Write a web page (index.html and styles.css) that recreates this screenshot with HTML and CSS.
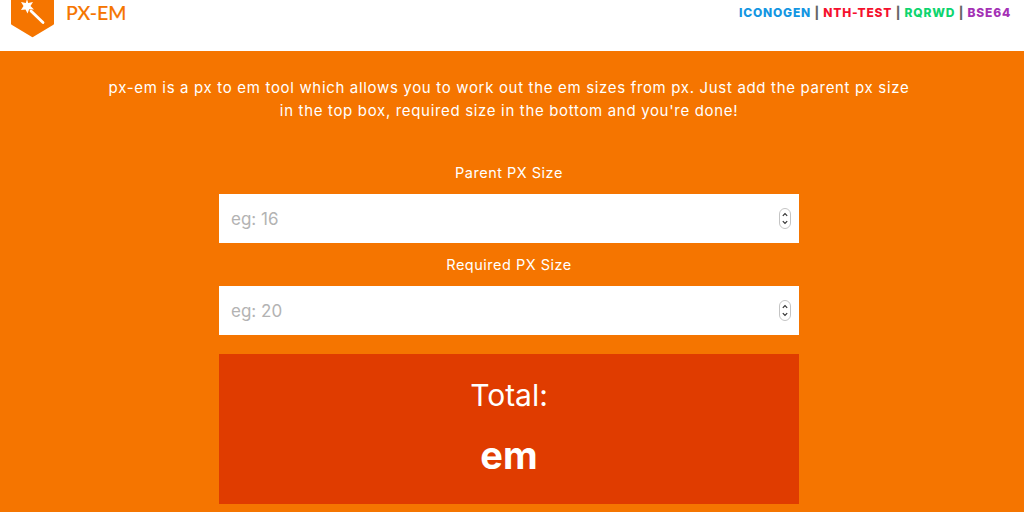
FILE: index.html
```html
<!DOCTYPE html>
<html lang="en">
<head>
  <meta charset="UTF-8" />
  <meta name="viewport" content="width=device-width, initial-scale=1.0"/>
  <title>PX-EM</title>
  <link rel="stylesheet" href="styles.css">
</head>
<body>
  <header>
    <a class="logo" href="#">
      <svg class="logo-badge" width="43" height="38" viewBox="0 0 43 38">
        <path d="M0 0H43V23.5Q43 24.5 42 25L22 37Q21.5 37.3 21 37L1 25Q0 24.5 0 23.5Z" fill="#f57500"/>
        <path d="M20 11L32 22.5" stroke="#fff" stroke-width="2.8" stroke-linecap="round"/>
        <path d="M16 -1L17.2 3L22 2L19.5 6L23 9.5L18.2 9.2L16.5 13.5L14.5 9.5L10 10L12.5 6L10 2L14.8 3Z" fill="#fff"/>
      </svg>
      <span class="logo-text">PX-EM</span>
    </a>
    <nav>
      <a class="blue" href="#">ICONOGEN</a> <span class="sep">|</span>
      <a class="red" href="#">NTH-TEST</a> <span class="sep">|</span>
      <a class="green" href="#">RQRWD</a> <span class="sep">|</span>
      <a class="purple" href="#">BSE64</a>
    </nav>
  </header>

  <main>
    <p class="intro">px-em is a px to em tool which allows you to work out the em sizes from px. Just add the parent px size in the top box, required size in the bottom and you're done!</p>

    <form class="calc">
      <label for="parent">Parent PX Size</label>
      <div class="field">
        <input id="parent" type="text" placeholder="eg: 16">
        <svg class="spinner" width="12" height="21" viewBox="0 0 12 21">
          <rect x="0.5" y="0.5" width="11" height="20" rx="5.5" fill="#fff" stroke="#c4c4c4"/>
          <path d="M3.8 7.8L6 5.6L8.2 7.8M3.8 13.2L6 15.4L8.2 13.2" fill="none" stroke="#333" stroke-width="1.2"/>
        </svg>
      </div>

      <label for="required">Required PX Size</label>
      <div class="field">
        <input id="required" type="text" placeholder="eg: 20">
        <svg class="spinner" width="12" height="21" viewBox="0 0 12 21">
          <rect x="0.5" y="0.5" width="11" height="20" rx="5.5" fill="#fff" stroke="#c4c4c4"/>
          <path d="M3.8 7.8L6 5.6L8.2 7.8M3.8 13.2L6 15.4L8.2 13.2" fill="none" stroke="#333" stroke-width="1.2"/>
        </svg>
      </div>

      <div class="total">
        <h2>Total:</h2>
        <p>em</p>
      </div>
    </form>
  </main>
</body>
</html>
```

FILE: styles.css
```css
* { box-sizing: border-box; }

html, body {
  height: 100%;
  overflow: hidden;
}

body {
  margin: 0;
  font-family: Inter, 'Open Sans', sans-serif;
  background-color: #f57500;
  color: white;
}

a {
  text-decoration: none;
}

header {
  height: 51px;
  background-color: white;
  display: flex;
  justify-content: space-between;
  align-items: flex-start;
  padding: 0 13px 0 11px;
}

.logo {
  display: flex;
  align-items: flex-start;
  gap: 12px;
}

.logo-badge {
  display: block;
}

.logo-text {
  font-family: Lato, sans-serif;
  font-size: 19.5px;
  font-weight: 500;
  line-height: 25px;
  color: #f57500;
  -webkit-text-stroke: 0.15px #f57500;
}

nav {
  font-size: 12px;
  font-weight: 800;
  line-height: 16px;
  padding-top: 5px;
  letter-spacing: 0.8px;
  white-space: nowrap;
}

.sep { color: #666; }
.blue { color: #1396e2; }
.red { color: #f5102d; }
.green { color: #0ed46f; }
.purple { color: #a431b5; }

main {
  padding-right: 6px;
}

.intro {
  width: 810px;
  margin: 0 auto;
  padding-top: 25px;
  font-size: 15px;
  line-height: 23px;
  letter-spacing: 0.67px;
  text-align: center;
}

.calc {
  width: 580px;
  margin: 29px auto 0;
}

label {
  display: block;
  text-align: center;
  font-size: 14.5px;
  line-height: 23px;
  letter-spacing: 0.5px;
  padding-top: 10px;
  padding-bottom: 10px;
}

.field {
  position: relative;
  height: 49px;
}

.field input {
  width: 100%;
  height: 100%;
  border: none;
  padding: 0 12px;
  font-family: inherit;
  font-size: 17px;
  background: white;
}

.field input::placeholder {
  color: #b3b3b3;
  opacity: 1;
}

.spinner {
  position: absolute;
  top: 14px;
  right: 8px;
}

.total {
  height: 150px;
  margin-top: 19px;
  background-color: #e03c00;
  text-align: center;
  padding-top: 23px;
}

.total h2 {
  margin: 0;
  font-size: 30px;
  font-weight: 400;
  line-height: 36px;
}

.total p {
  margin: 20px 0 0;
  font-size: 38px;
  font-weight: 700;
  line-height: 44px;
}
```
